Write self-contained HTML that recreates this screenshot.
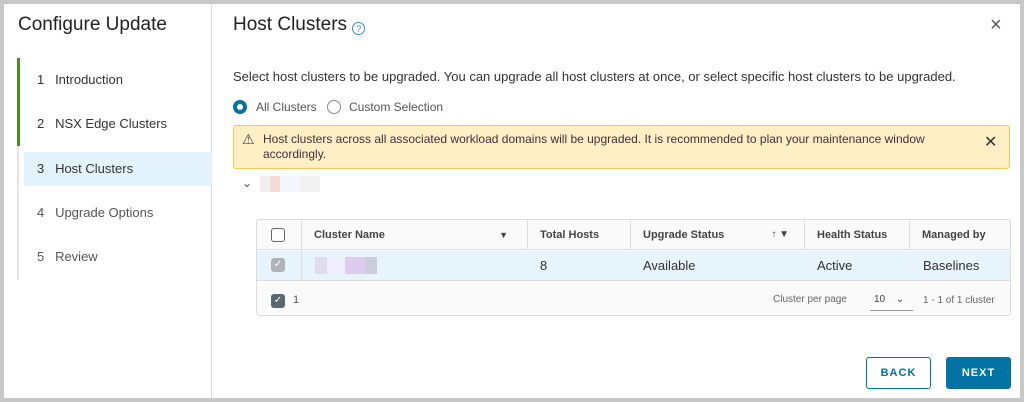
<!DOCTYPE html><html><head><style>
*{box-sizing:border-box;margin:0;padding:0}
body{width:1024px;height:402px;background:#c8c8c8;font-family:"Liberation Sans",sans-serif;color:#333;position:relative;overflow:hidden}
.win{position:absolute;left:4px;top:4px;width:1016px;height:394px;background:#fff}
.side{position:absolute;left:0;top:0;width:208px;height:394px;border-right:1px solid #ddd}
.abs{position:absolute}
.step{position:absolute;left:20px;width:188px;height:34px;font-size:13px;line-height:34px;padding-left:13px;color:#333}
.th{position:absolute;top:0;height:30px;line-height:30px;font-size:11px;font-weight:bold;color:#444;border-left:1px solid #ddd;padding-left:12px}
.td{position:absolute;top:30px;height:30px;line-height:30px;font-size:13px;color:#333}
</style></head><body><div class="win">
<div class="side">
<div class="abs" style="left:14px;top:10px;font-size:19px;color:#222">Configure Update</div>
<div class="abs" style="left:13px;top:54px;width:2px;height:222px;background:#e5e5e5"></div>
<div class="abs" style="left:13px;top:54px;width:3px;height:88px;background:#4b8b1f"></div>
<div class="step" style="top:59px">1&nbsp;&nbsp;&nbsp;Introduction</div>
<div class="step" style="top:103px">2&nbsp;&nbsp;&nbsp;NSX Edge Clusters</div>
<div class="step" style="top:148px;background:#e3f3fc">3&nbsp;&nbsp;&nbsp;Host Clusters</div>
<div class="step" style="top:192px;color:#555">4&nbsp;&nbsp;&nbsp;Upgrade Options</div>
<div class="step" style="top:236px;color:#555">5&nbsp;&nbsp;&nbsp;Review</div>
</div>
<div class="abs" style="left:229px;top:10px;font-size:19px;color:#222">Host Clusters <span style="display:inline-block;width:13px;height:13px;border:1px solid #2f8fce;border-radius:50%;font-size:9px;line-height:12px;text-align:center;color:#2f8fce;vertical-align:-2px">?</span></div>
<div class="abs" style="left:986px;top:10px;font-size:20px;color:#555">×</div>
<div class="abs" style="left:229px;top:65px;font-size:13px;color:#333">Select host clusters to be upgraded. You can upgrade all host clusters at once, or select specific host clusters to be upgraded.</div>
<div class="abs" style="left:229px;top:96px;width:14px;height:14px;border-radius:50%;background:#0072a3"><div style="margin:4px;width:6px;height:6px;border-radius:50%;background:#fff"></div></div>
<div class="abs" style="left:252px;top:96px;font-size:12px;color:#555">All Clusters</div>
<div class="abs" style="left:323px;top:96px;width:14px;height:14px;border-radius:50%;border:1px solid #888"></div>
<div class="abs" style="left:345px;top:96px;font-size:12px;color:#555">Custom Selection</div>
<div class="abs" style="left:229px;top:121px;width:777px;height:44px;background:#feefc4;border:1px solid #fcc94a;border-radius:3px"></div>
<div class="abs" style="left:238px;top:127px;font-size:14px;color:#444">⚠</div>
<div class="abs" style="left:259px;top:128px;width:700px;font-size:12px;line-height:15px;color:#4a2c3c">Host clusters across all associated workload domains will be upgraded. It is recommended to plan your maintenance window accordingly.</div>
<div class="abs" style="left:980px;top:128px;font-size:16px;color:#333">✕</div>
<div class="abs" style="left:238px;top:172px;font-size:12px;color:#555">⌄</div>
<div class="abs" style="left:256px;top:172px;width:60px;height:16px;background:linear-gradient(90deg,#f3eeee 0 10px,#f1dcd8 10px 20px,#f4f7fb 20px 40px,#f2f2f2 40px)"></div>
<div class="abs" style="left:252px;top:215px;width:755px;height:97px;border:1px solid #ddd;border-radius:3px;background:#fafafa;overflow:hidden">
<div class="abs" style="left:0;top:0;width:755px;height:30px;background:#fafafa;border-bottom:1px solid #ddd"></div>
<div class="abs" style="left:14px;top:8px;width:14px;height:14px;border:1px solid #666;border-radius:3px;background:#fff"></div>
<div class="th" style="left:44px;width:225px">Cluster Name<span style="position:absolute;right:18px;font-size:9px">▼</span></div>
<div class="th" style="left:270px;width:103px">Total Hosts</div>
<div class="th" style="left:373px;width:173px">Upgrade Status<span style="position:absolute;right:14px;font-size:10px">↑ ▼</span></div>
<div class="th" style="left:547px;width:105px">Health Status</div>
<div class="th" style="left:652px;width:103px">Managed by</div>
<div class="abs" style="left:0;top:31px;width:755px;height:30px;background:#e8f4fb;border-bottom:1px solid #ddd"></div>
<div class="abs" style="left:14px;top:38px;width:14px;height:14px;border-radius:3px;background:#aeb4b8;color:#fff;font-size:10px;text-align:center;line-height:14px">✓</div>
<div class="abs" style="left:44px;top:31px;width:1px;height:30px;background:#ddd"></div>
<div class="abs" style="left:58px;top:37px;width:62px;height:17px;background:linear-gradient(90deg,#dde 0 12px,#eef 12px 30px,#dce 30px 50px,#ccd 50px)"></div>
<div class="td" style="left:283px;top:31px">8</div>
<div class="td" style="left:386px;top:31px">Available</div>
<div class="td" style="left:560px;top:31px">Active</div>
<div class="td" style="left:666px;top:31px">Baselines</div>
<div class="abs" style="left:14px;top:74px;width:14px;height:14px;border-radius:3px;background:#5b6770;color:#fff;font-size:10px;text-align:center;line-height:14px">✓</div>
<div class="abs" style="left:36px;top:74px;font-size:11px;color:#555">1</div>
<div class="abs" style="left:516px;top:74px;font-size:10px;color:#666">Cluster per page</div>
<div class="abs" style="left:613px;top:71px;width:43px;height:20px;border-bottom:1px solid #999;font-size:10px;color:#444;padding:3px 0 0 4px">10 <span style="margin-left:8px">⌄</span></div>
<div class="abs" style="left:666px;top:75px;font-size:10px;color:#666">1 - 1 of 1 cluster</div>
</div>
<div class="abs" style="left:862px;top:353px;width:65px;height:32px;border:1px solid #0072a3;border-radius:3px;color:#0072a3;font-size:11px;font-weight:bold;text-align:center;line-height:30px;letter-spacing:1px">BACK</div>
<div class="abs" style="left:942px;top:353px;width:65px;height:32px;background:#0072a3;border-radius:3px;color:#fff;font-size:11px;font-weight:bold;text-align:center;line-height:32px;letter-spacing:1px">NEXT</div>
</div></body></html>
